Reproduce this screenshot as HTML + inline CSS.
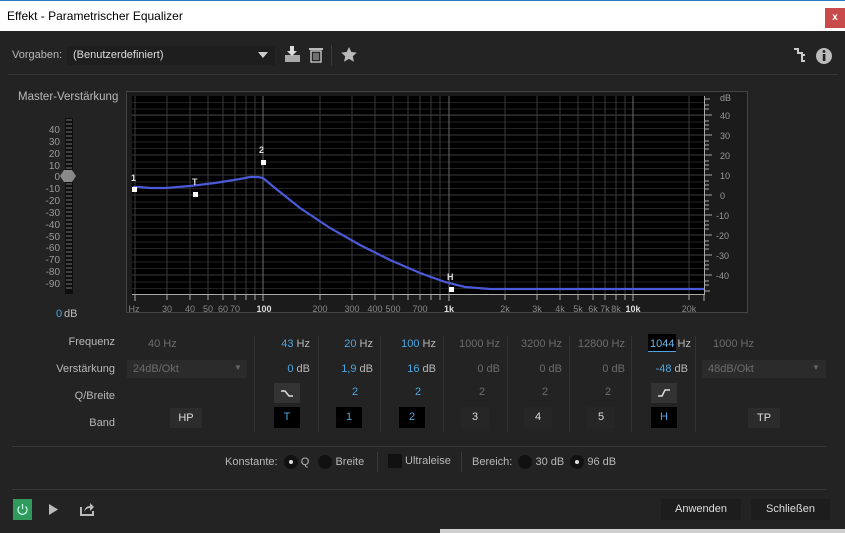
<!DOCTYPE html>
<html><head><meta charset="utf-8"><style>
*{margin:0;padding:0;box-sizing:border-box}
body{width:845px;height:533px;background:#232323;font-family:"Liberation Sans",sans-serif;font-size:11px;color:#b8b8b8;position:relative;overflow:hidden}
.a{position:absolute;white-space:nowrap}
.r{text-align:right}
.c{text-align:center}
.g{color:#6c6c6c}
.b{color:#4ea5e0}
.btn{position:absolute;height:20px;width:32px;line-height:20px;text-align:center;background:#2c2c2c;color:#ddd;font-size:11px}
.bk{background:#000;color:#4ea5e0;width:26px}
.sep{position:absolute;width:1px;background:#333;top:336px;height:96px}
.rad{display:inline-block;width:14px;height:14px;border-radius:7px;background:#111;vertical-align:middle;position:relative;margin-right:3px}
.rad.on::after{content:"";position:absolute;left:5px;top:5px;width:4px;height:4px;border-radius:2px;background:#ddd}
</style></head><body>
<div class="a" style="left:0;top:0;width:845px;height:31px;background:#fff;border-top:1px solid #2b79c2"></div>
<div class="a" style="left:7px;top:9px;color:#000;font-size:12px">Effekt - Parametrischer Equalizer</div>
<div class="a" style="left:825px;top:8px;width:20px;height:20px;background:#c84a4b;color:#fff;text-align:center;line-height:19px;font-size:10px;font-weight:bold">x</div>

<div class="a" style="left:12px;top:49px">Vorgaben:</div>
<div class="a" style="left:67px;top:46px;width:208px;height:19px;background:#1e1e1e"></div>
<div class="a" style="left:73px;top:49px;color:#ddd">(Benutzerdefiniert)</div>
<svg class="a" style="left:0;top:0" width="845" height="80">
<path d="M258,52 L268,52 L263,58Z" fill="#ccc"/>
<rect x="285" y="55" width="15" height="7" fill="#aaa"/><path d="M290,46 h4 v5 h3 l-5,5 -5,-5 h3z" fill="#ddd"/>
<rect x="311" y="51" width="10" height="11" fill="none" stroke="#bbb" stroke-width="1.5"/><rect x="309" y="48" width="14" height="2" fill="#bbb"/><path d="M314,53v7M316,53v7M318,53v7" stroke="#bbb"/>
<line x1="331.5" y1="45" x2="331.5" y2="66" stroke="#3a3a3a"/>
<path d="M349,47 l2.4,5 5.4,.6 -4,3.7 1.1,5.4 -4.9,-2.8 -4.9,2.8 1.1,-5.4 -4,-3.7 5.4,-.6z" fill="#bbb"/>
<path d="M794,49h4v4h4v8h3M802,55h3M798,49v2" stroke="#ccc" stroke-width="2" fill="none"/>
<circle cx="824" cy="56" r="8" fill="#bbb"/><rect x="822.8" y="54" width="2.6" height="7" fill="#232323"/><circle cx="824" cy="51.5" r="1.4" fill="#232323"/>
<line x1="8" y1="74.5" x2="838" y2="74.5" stroke="#343434"/>
</svg>

<div class="a" style="left:18px;top:91px;font-size:11.5px">Master-Verstärkung</div>
<svg class="a" style="left:0;top:110px" width="120" height="220">
<g fill="#999" font-size="10" font-family="Liberation Sans" text-anchor="end">
<text x="60" y="23">40</text><text x="60" y="35">30</text><text x="60" y="47">20</text><text x="60" y="59">10</text><text x="60" y="70">0</text><text x="60" y="82">-10</text><text x="60" y="94">-20</text><text x="60" y="106">-30</text><text x="60" y="118">-40</text><text x="60" y="130">-50</text><text x="60" y="141">-60</text><text x="60" y="153">-70</text><text x="60" y="165">-80</text><text x="60" y="177">-90</text>
</g>
<rect x="65" y="8" width="8" height="176" fill="#0e0e0e"/>
<path d="M66,10h6M66,14h6M66,18h6M66,22h6M66,26h6M66,30h6M66,34h6M66,38h6M66,42h6M66,46h6M66,50h6M66,54h6M66,58h6M66,62h6M66,66h6M66,70h6M66,74h6M66,78h6M66,82h6M66,86h6M66,90h6M66,94h6M66,98h6M66,102h6M66,106h6M66,110h6M66,114h6M66,118h6M66,122h6M66,126h6M66,130h6M66,134h6M66,138h6M66,142h6M66,146h6M66,150h6M66,154h6M66,158h6M66,162h6M66,166h6M66,170h6M66,174h6M66,178h6" stroke="#777" stroke-width="1"/>
<path d="M60,66 L64,60 L72,60 L76,66 L72,72 L64,72Z" fill="#8a8a8a"/>
<text x="56" y="207" fill="#4ea5e0" font-size="11" font-family="Liberation Sans">0</text><text x="64" y="207" fill="#bbb" font-size="11" font-family="Liberation Sans">dB</text>
</svg>

<svg class="a" style="left:126px;top:91px" width="622" height="222">
<rect x="0.5" y="0.5" width="621" height="221" fill="#1b1b1b" stroke="#444"/>
<rect x="6" y="5" width="573" height="199" fill="#000"/>
<g stroke="#222">
<path d="M6,11.5h573M6,18h573M6,24.5h573M6,31h573M6,37.5h573M6,44h573M6,51h573M6,57.5h573M6,64h573M6,71h573M6,77.5h573M6,84h573M6,91h573M6,97.5h573M6,104h573M6,111h573M6,117.5h573M6,124h573M6,131h573M6,137.5h573M6,144h573M6,151h573M6,157.5h573M6,164h573M6,171h573M6,177.5h573M6,184h573M6,191h573M6,197.5h573"/>
</g>
<g stroke="#3a3a3a">
<path d="M6,24h573M6,44h573M6,64h573M6,84h573M6,104h573M6,124h573M6,144h573M6,164h573M6,184h573"/>
<path d="M9,5v199M41,5v199M64,5v199M82,5v199M97,5v199M109,5v199M120,5v199M129,5v199M194,5v199M226,5v199M249,5v199M267,5v199M282,5v199M294,5v199M305,5v199M314,5v199M379,5v199M411,5v199M434,5v199M452,5v199M467,5v199M479,5v199M490,5v199M499,5v199M563,5v199"/>
</g>
<g stroke="#6a6a6a"><path d="M137,5v199M323,5v199M507,5v199"/></g>
<path d="M6,203.5h573M578.5,5v199" stroke="#aaa"/>
<g stroke="#aaa"><path d="M9,204v6M41,204v5M64,204v5M82,204v5M97,204v5M109,204v5M120,204v5M129,204v5M137,204v6M194,204v5M226,204v5M249,204v5M267,204v5M282,204v5M294,204v5M305,204v5M314,204v5M323,204v6M379,204v5M411,204v5M434,204v5M452,204v5M467,204v5M479,204v5M490,204v5M499,204v5M507,204v6M563,204v5M578,204v6"/>
<path d="M579,8h5M579,24h7M579,44h7M579,64h7M579,84h7M579,104h7M579,124h7M579,144h7M579,164h7M579,184h7M579,200h5M579,14h4M579,18h4M579,30h4M579,34h4M579,38h4M579,50h4M579,54h4M579,58h4M579,70h4M579,74h4M579,78h4M579,90h4M579,94h4M579,98h4M579,110h4M579,114h4M579,118h4M579,130h4M579,134h4M579,138h4M579,150h4M579,154h4M579,158h4M579,170h4M579,174h4M579,178h4M579,190h4M579,194h4"/></g>
<g fill="#999" font-size="9" font-family="Liberation Sans">
<text x="594" y="10">dB</text><text x="594" y="28">40</text><text x="594" y="48">30</text><text x="594" y="68">20</text><text x="594" y="88">10</text><text x="594" y="108">0</text><text x="590" y="128">-10</text><text x="590" y="148">-20</text><text x="590" y="168">-30</text><text x="590" y="188">-40</text>
</g>
<g fill="#888" font-size="9" font-family="Liberation Sans" text-anchor="middle">
<text x="8" y="221">Hz</text><text x="41" y="221">30</text><text x="64" y="221">40</text><text x="82" y="221">50</text><text x="97" y="221">60</text><text x="109" y="221">70</text>
<text x="194" y="221">200</text><text x="226" y="221">300</text><text x="249" y="221">400</text><text x="267" y="221">500</text><text x="294" y="221">700</text>
<text x="379" y="221">2k</text><text x="411" y="221">3k</text><text x="434" y="221">4k</text><text x="452" y="221">5k</text><text x="467" y="221">6k</text><text x="479" y="221">7k</text><text x="490" y="221">8k</text><text x="563" y="221">20k</text>
<g fill="#ddd" font-weight="bold"><text x="138" y="221">100</text><text x="323" y="221">1k</text><text x="507" y="221">10k</text></g>
</g>
<path d="M7,96 L14,96 L24,97 L40,97 L64,95 L89,92 L114,88 L124,86 L132,86 L137,87 L149,97 L174,117 L204,137 L234,154 L264,169 L294,182 L319,191 L339,196 L364,198 L578,198" fill="none" stroke="#4a5ad8" stroke-width="2.2"/>
<g fill="#fff"><rect x="6" y="96" width="5" height="5"/><rect x="67" y="101" width="5" height="5"/><rect x="135" y="69" width="5" height="5"/><rect x="323" y="196" width="5" height="5"/></g>
<g fill="#ddd" font-size="9" font-weight="bold" font-family="Liberation Sans"><text x="5" y="90">1</text><text x="66" y="94">T</text><text x="133" y="62">2</text><text x="321" y="189">H</text></g>
</svg>

<div class="a r" style="left:30px;top:336px;width:85px">Frequenz</div>
<div class="a r" style="left:30px;top:363px;width:85px">Verstärkung</div>
<div class="a r" style="left:30px;top:390px;width:85px">Q/Breite</div>
<div class="a r" style="left:30px;top:417px;width:85px">Band</div>

<div class="sep" style="left:254px"></div><div class="sep" style="left:318px"></div><div class="sep" style="left:380px"></div><div class="sep" style="left:443px"></div><div class="sep" style="left:507px"></div><div class="sep" style="left:569px"></div><div class="sep" style="left:631px"></div><div class="sep" style="left:695px"></div>

<div class="a g" style="left:148px;top:338px">40 Hz</div>
<div class="a" style="left:127px;top:360px;width:120px;height:18px;background:#2b2b2b"></div>
<div class="a g" style="left:133px;top:363px">24dB/Okt</div>
<div class="a" style="left:234px;top:363px;color:#666;font-size:8px">▼</div>
<div class="btn" style="left:170px;top:408px">HP</div>

<div class="a r" style="left:250px;top:338px;width:60px"><span class="b">43</span> Hz</div>
<div class="a r" style="left:250px;top:363px;width:60px"><span class="b">0</span> dB</div>
<div class="btn" style="left:274px;top:383px;width:26px;background:#333"></div>
<svg class="a" style="left:280px;top:388px" width="14" height="10"><path d="M1,3h4l4,5h4" stroke="#ddd" stroke-width="1.5" fill="none"/></svg>
<div class="btn bk" style="left:274px;top:407px;height:21px">T</div>

<div class="a r" style="left:313px;top:338px;width:60px"><span class="b">20</span> Hz</div>
<div class="a r" style="left:313px;top:363px;width:60px"><span class="b">1,9</span> dB</div>
<div class="a c b" style="left:340px;top:386px;width:30px">2</div>
<div class="btn bk" style="left:336px;top:407px;height:21px">1</div>

<div class="a r" style="left:376px;top:338px;width:60px"><span class="b">100</span> Hz</div>
<div class="a r" style="left:376px;top:363px;width:60px"><span class="b">16</span> dB</div>
<div class="a c b" style="left:403px;top:386px;width:30px">2</div>
<div class="btn bk" style="left:399px;top:407px;height:21px">2</div>

<div class="a r g" style="left:440px;top:338px;width:60px">1000 Hz</div>
<div class="a r g" style="left:440px;top:363px;width:60px">0 dB</div>
<div class="a c g" style="left:467px;top:386px;width:30px">2</div>
<div class="btn" style="left:461px;top:407px;width:28px;height:21px;background:#262626">3</div>

<div class="a r g" style="left:502px;top:338px;width:60px">3200 Hz</div>
<div class="a r g" style="left:502px;top:363px;width:60px">0 dB</div>
<div class="a c g" style="left:530px;top:386px;width:30px">2</div>
<div class="btn" style="left:524px;top:407px;width:28px;height:21px;background:#262626">4</div>

<div class="a r g" style="left:565px;top:338px;width:60px">12800 Hz</div>
<div class="a r g" style="left:565px;top:363px;width:60px">0 dB</div>
<div class="a c g" style="left:593px;top:386px;width:30px">2</div>
<div class="btn" style="left:587px;top:407px;width:28px;height:21px;background:#262626">5</div>

<div class="a" style="left:648px;top:334px;width:28px;height:18px;background:#000;border-bottom:1px solid #4ea5e0"></div>
<div class="a" style="left:650px;top:338px"><span style="color:#6cb8ee">1044</span> Hz</div>
<div class="a r" style="left:628px;top:363px;width:60px"><span class="b">-48</span> dB</div>
<div class="btn" style="left:651px;top:383px;width:26px;background:#333"></div>
<svg class="a" style="left:657px;top:388px" width="14" height="10"><path d="M1,8h4l3,-6h5" stroke="#ddd" stroke-width="1.5" fill="none"/></svg>
<div class="btn bk" style="left:651px;top:407px;height:21px">H</div>

<div class="a g" style="left:713px;top:338px">1000 Hz</div>
<div class="a" style="left:702px;top:360px;width:124px;height:18px;background:#2b2b2b"></div>
<div class="a g" style="left:708px;top:363px">48dB/Okt</div>
<div class="a" style="left:812px;top:363px;color:#666;font-size:8px">▼</div>
<div class="btn" style="left:748px;top:408px">TP</div>

<div class="a" style="left:12px;top:446px;width:814px;height:1px;background:#383838"></div>
<div class="a" style="left:225px;top:454px;line-height:16px">Konstante: &nbsp;<span class="rad on"></span>Q &nbsp;&nbsp;<span class="rad"></span>Breite</div>
<div class="a" style="left:377px;top:452px;width:1px;height:20px;background:#3a3a3a"></div>
<div class="a" style="left:388px;top:454px;width:14px;height:14px;background:#111"></div>
<div class="a" style="left:405px;top:455px">Ultraleise</div>
<div class="a" style="left:461px;top:452px;width:1px;height:20px;background:#3a3a3a"></div>
<div class="a" style="left:472px;top:454px;line-height:16px">Bereich: &nbsp;<span class="rad"></span>30 dB &nbsp;<span class="rad on"></span>96 dB</div>
<div class="a" style="left:12px;top:489px;width:814px;height:1px;background:#383838"></div>

<div class="a" style="left:13px;top:499px;width:19px;height:21px;background:#2f9a5c"></div>
<svg class="a" style="left:13px;top:499px" width="19" height="21"><path d="M6.5,7.5 A4.5,4.5 0 1 0 12.5,7.5" stroke="#cfe" stroke-width="1.2" fill="none"/><path d="M9.5,5v5" stroke="#cfe" stroke-width="1.2"/></svg>
<svg class="a" style="left:48px;top:503px" width="12" height="13"><path d="M1,1 L10,6.5 L1,12Z" fill="#bbb"/></svg>
<svg class="a" style="left:79px;top:501px" width="16" height="16"><path d="M2,6v8h12v-4" stroke="#bbb" stroke-width="2" fill="none"/><path d="M5,11 Q6,5 11,5 V2 L15,6 L11,10 V7 Q7,7 5,11Z" fill="#bbb"/></svg>
<div class="a c" style="left:661px;top:499px;width:80px;height:21px;line-height:21px;background:#1d1d1d;color:#ddd">Anwenden</div>
<div class="a c" style="left:751px;top:499px;width:79px;height:21px;line-height:21px;background:#1d1d1d;color:#ddd">Schließen</div>
<div class="a" style="left:440px;top:529px;width:405px;height:4px;background:#cfcfcf"></div>
</body></html>
